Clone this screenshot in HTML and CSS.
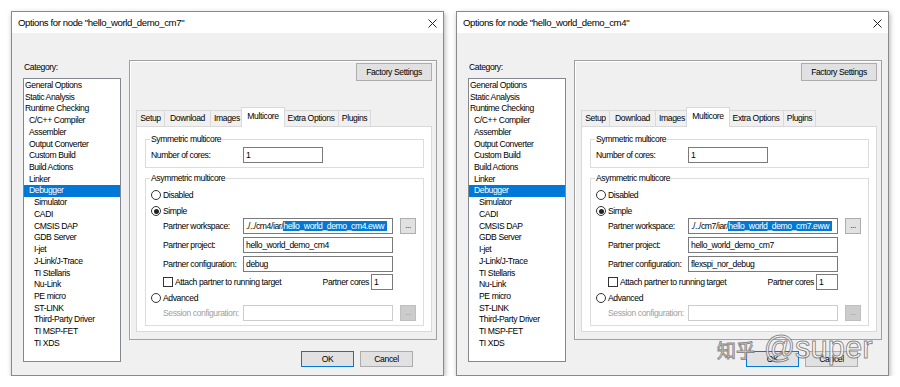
FILE: index.html
```html
<!DOCTYPE html>
<html lang="en">
<head>
    <meta charset="UTF-8">
    <title>Options for node</title>
    <link rel="stylesheet" href="styles.css">
</head>
<body>
<div class="screen">

    <!-- cm7 -->
    <div class="dialog">
        <div class="titlebar">
            <span class="title">Options for node "hello_world_demo_cm7"</span>
            <svg class="close" width="9" height="9" viewBox="0 0 9 9"><path d="M0.5 0.5L8.5 8.5M8.5 0.5L0.5 8.5" stroke="#222" stroke-width="1"/></svg>
        </div>
        <div class="dlg-body">
            <div class="cat-col">
                <div class="cat-label">Category:</div>
                <ul class="cat-list">
                    <li>General Options</li>
                    <li>Static Analysis</li>
                    <li>Runtime Checking</li>
                    <li class="l1">C/C++ Compiler</li>
                    <li class="l1">Assembler</li>
                    <li class="l1">Output Converter</li>
                    <li class="l1">Custom Build</li>
                    <li class="l1">Build Actions</li>
                    <li class="l1">Linker</li>
                    <li class="l1 sel">Debugger</li>
                    <li class="l2">Simulator</li>
                    <li class="l2">CADI</li>
                    <li class="l2">CMSIS DAP</li>
                    <li class="l2">GDB Server</li>
                    <li class="l2">I-jet</li>
                    <li class="l2">J-Link/J-Trace</li>
                    <li class="l2">TI Stellaris</li>
                    <li class="l2">Nu-Link</li>
                    <li class="l2">PE micro</li>
                    <li class="l2">ST-LINK</li>
                    <li class="l2">Third-Party Driver</li>
                    <li class="l2">TI MSP-FET</li>
                    <li class="l2">TI XDS</li>
                </ul>
            </div>
            <div class="main-col">
                <div class="panel">
                    <div class="panel-top"><span class="btn factory">Factory Settings</span></div>
                    <div class="tabs">
                        <span class="tab t-setup">Setup</span>
                        <span class="tab t-download">Download</span>
                        <span class="tab t-images">Images</span>
                        <span class="tab t-multi active">Multicore</span>
                        <span class="tab t-extra">Extra Options</span>
                        <span class="tab t-plugins">Plugins</span>
                    </div>
                    <div class="page">
                        <fieldset class="group sym">
                            <legend>Symmetric multicore</legend>
                            <div class="row">
                                <span class="lbl lbl-wide">Number of cores:</span>
                                <span class="field f-cores">1</span>
                            </div>
                        </fieldset>
                        <fieldset class="group asym">
                            <legend>Asymmetric multicore</legend>
                            <div class="opt"><span class="radio"></span>Disabled</div>
                            <div class="opt"><span class="radio on"></span>Simple</div>
                            <div class="sub">
                                <div class="row">
                                    <span class="lbl">Partner workspace:</span>
                                    <span class="field f-long">./../cm4/iar/<span class="hl">hello_world_demo_cm4.eww</span></span>
                                    <span class="btn browse">...</span>
                                </div>
                                <div class="row">
                                    <span class="lbl">Partner project:</span>
                                    <span class="field f-long">hello_world_demo_cm4</span>
                                </div>
                                <div class="row">
                                    <span class="lbl">Partner configuration:</span>
                                    <span class="field f-long">debug</span>
                                </div>
                                <div class="row attach">
                                    <span class="check"></span>
                                    <span>Attach partner to running target</span>
                                    <span class="cores-lbl">Partner cores</span>
                                    <span class="field f-small">1</span>
                                </div>
                            </div>
                            <div class="opt"><span class="radio"></span>Advanced</div>
                            <div class="sub">
                                <div class="row off">
                                    <span class="lbl">Session configuration:</span>
                                    <span class="field f-long"></span>
                                    <span class="btn browse">...</span>
                                </div>
                            </div>
                        </fieldset>
                    </div>
                </div>
                <div class="actions">
                    <span class="btn ok">OK</span>
                    <span class="btn cancel">Cancel</span>
                </div>
            </div>
        </div>
    </div>

    <!-- cm4 -->
    <div class="dialog">
        <div class="titlebar">
            <span class="title">Options for node "hello_world_demo_cm4"</span>
            <svg class="close" width="9" height="9" viewBox="0 0 9 9"><path d="M0.5 0.5L8.5 8.5M8.5 0.5L0.5 8.5" stroke="#222" stroke-width="1"/></svg>
        </div>
        <div class="dlg-body">
            <div class="cat-col">
                <div class="cat-label">Category:</div>
                <ul class="cat-list">
                    <li>General Options</li>
                    <li>Static Analysis</li>
                    <li>Runtime Checking</li>
                    <li class="l1">C/C++ Compiler</li>
                    <li class="l1">Assembler</li>
                    <li class="l1">Output Converter</li>
                    <li class="l1">Custom Build</li>
                    <li class="l1">Build Actions</li>
                    <li class="l1">Linker</li>
                    <li class="l1 sel">Debugger</li>
                    <li class="l2">Simulator</li>
                    <li class="l2">CADI</li>
                    <li class="l2">CMSIS DAP</li>
                    <li class="l2">GDB Server</li>
                    <li class="l2">I-jet</li>
                    <li class="l2">J-Link/J-Trace</li>
                    <li class="l2">TI Stellaris</li>
                    <li class="l2">Nu-Link</li>
                    <li class="l2">PE micro</li>
                    <li class="l2">ST-LINK</li>
                    <li class="l2">Third-Party Driver</li>
                    <li class="l2">TI MSP-FET</li>
                    <li class="l2">TI XDS</li>
                </ul>
            </div>
            <div class="main-col">
                <div class="panel">
                    <div class="panel-top"><span class="btn factory">Factory Settings</span></div>
                    <div class="tabs">
                        <span class="tab t-setup">Setup</span>
                        <span class="tab t-download">Download</span>
                        <span class="tab t-images">Images</span>
                        <span class="tab t-multi active">Multicore</span>
                        <span class="tab t-extra">Extra Options</span>
                        <span class="tab t-plugins">Plugins</span>
                    </div>
                    <div class="page">
                        <fieldset class="group sym">
                            <legend>Symmetric multicore</legend>
                            <div class="row">
                                <span class="lbl lbl-wide">Number of cores:</span>
                                <span class="field f-cores">1</span>
                            </div>
                        </fieldset>
                        <fieldset class="group asym">
                            <legend>Asymmetric multicore</legend>
                            <div class="opt"><span class="radio"></span>Disabled</div>
                            <div class="opt"><span class="radio on"></span>Simple</div>
                            <div class="sub">
                                <div class="row">
                                    <span class="lbl">Partner workspace:</span>
                                    <span class="field f-long">./../cm7/iar/<span class="hl">hello_world_demo_cm7.eww</span></span>
                                    <span class="btn browse">...</span>
                                </div>
                                <div class="row">
                                    <span class="lbl">Partner project:</span>
                                    <span class="field f-long">hello_world_demo_cm7</span>
                                </div>
                                <div class="row">
                                    <span class="lbl">Partner configuration:</span>
                                    <span class="field f-long">flexspi_nor_debug</span>
                                </div>
                                <div class="row attach">
                                    <span class="check"></span>
                                    <span>Attach partner to running target</span>
                                    <span class="cores-lbl">Partner cores</span>
                                    <span class="field f-small">1</span>
                                </div>
                            </div>
                            <div class="opt"><span class="radio"></span>Advanced</div>
                            <div class="sub">
                                <div class="row off">
                                    <span class="lbl">Session configuration:</span>
                                    <span class="field f-long"></span>
                                    <span class="btn browse">...</span>
                                </div>
                            </div>
                        </fieldset>
                    </div>
                </div>
                <div class="actions">
                    <span class="btn ok">OK</span>
                    <span class="btn cancel">Cancel</span>
                </div>
            </div>
        </div>
        <div class="watermark"><span class="wm-cn">知乎</span> @super</div>
    </div>

</div>
</body>
</html>
```

FILE: styles.css
```css
* {
    margin: 0;
    padding: 0;
    box-sizing: border-box;
}
body {
    background: #fff;
    font-family: "Liberation Sans", Arial, sans-serif;
    font-size: 8.6px;
    letter-spacing: -0.4px;
    color: #000;
}
.screen {
    display: flex;
    gap: 12px;
    padding: 11px 0 0 11px;
}
/*对话框*/
.dialog {
    position: relative;
    width: 433px;
    height: 365px;
    border: 1px solid #8a8a8a;
    background: #f0f0f0;
    box-shadow: 1px 2px 5px rgba(0, 0, 0, 0.3);
    display: flex;
    flex-direction: column;
}
.titlebar {
    height: 21px;
    background: #fff;
    display: flex;
    align-items: center;
    justify-content: space-between;
    padding: 0 6px 0 6px;
}
.title {
    font-size: 9.6px;
}
.close {
    margin-top: 1px;
}
.dlg-body {
    flex: 1;
    display: flex;
    gap: 8px;
    padding: 27px 6px 0 11px;
}
/*左侧列表*/
.cat-col {
    width: 98px;
}
.cat-label {
    line-height: 12px;
    margin-top: 1px;
    padding-left: 1px;
}
.cat-list {
    list-style: none;
    margin-top: 5px;
    height: 284px;
    background: #fff;
    border: 1px solid #828790;
    padding-top: 1px;
}
.cat-list li {
    height: 11.73px;
    line-height: 11.73px;
    padding-left: 1px;
    white-space: nowrap;
}
.cat-list .l1 {
    padding-left: 5px;
}
.cat-list .l2 {
    padding-left: 10px;
}
.cat-list .sel {
    background: #0078d7;
    color: #fff;
}
/*右侧*/
.main-col {
    width: 308px;
}
.panel {
    height: 280px;
    border: 1px solid #a0a0a0;
    box-shadow: inset 1px 1px 0 #fff;
    padding: 2px 4px 0 6px;
}
.panel-top {
    display: flex;
    justify-content: flex-end;
    height: 44px;
}
.btn {
    display: inline-flex;
    align-items: center;
    justify-content: center;
    background: #e1e1e1;
    border: 1px solid #adadad;
    height: 18px;
    white-space: nowrap;
}
.factory {
    width: 76px;
}
/*标签页*/
.tabs {
    display: flex;
    align-items: flex-end;
    height: 19px;
}
.tab {
    height: 16px;
    line-height: 15px;
    text-align: center;
    white-space: nowrap;
    border: 1px solid #d9d9d9;
    border-bottom: none;
    background: #f0f0f0;
    margin-right: -1px;
}
.tab.active {
    position: relative;
    z-index: 1;
    height: 20px;
    line-height: 16px;
    background: #fff;
    margin: 0 -2px -1px -2px;
    padding-bottom: 3px;
}
.t-setup { width: 29px; }
.t-download { width: 47px; }
.t-images { width: 34px; }
.t-multi { width: 44px; }
.t-extra { width: 56px; }
.t-plugins { width: 33px; }
.page {
    height: 206px;
    width: 296px;
    background: #fff;
    border: 1px solid #d9d9d9;
    padding: 6px 7px 0 8px;
}
/*分组*/
.group {
    border: 1px solid #dcdcdc;
    padding: 0 5px 3px 5px;
}
.group legend {
    padding: 0 1px;
    margin-left: -1px;
    line-height: 12px;
}
.sym {
    margin-bottom: 4px;
}
.asym {
    padding-top: 3px;
}
.row {
    display: flex;
    align-items: center;
    height: 19px;
}
.lbl {
    width: 80px;
    white-space: nowrap;
}
.lbl-wide {
    width: 92px;
}
.field {
    height: 16px;
    background: #fff;
    border: 1px solid #7a7a7a;
    padding-left: 2px;
    display: flex;
    align-items: center;
    white-space: nowrap;
    overflow: hidden;
}
.f-cores {
    width: 80px;
}
.f-long {
    width: 150px;
}
.f-small {
    width: 22px;
}
.hl {
    background: #0078d7;
    color: #fff;
    padding-right: 3px;
}
.browse {
    width: 16px;
    height: 16px;
    margin-left: 7px;
    font-size: 8px;
}
.opt {
    display: flex;
    align-items: center;
    height: 16px;
    gap: 2px;
}
.radio {
    width: 10px;
    height: 10px;
    border: 1px solid #333;
    border-radius: 50%;
    background: #fff;
    display: flex;
    align-items: center;
    justify-content: center;
}
.radio.on::after {
    content: "";
    width: 5px;
    height: 5px;
    border-radius: 50%;
    background: #222;
}
.sub {
    padding-left: 12px;
    margin-top: -3px;
}
.attach {
    width: 230px;
    height: 17px;
    gap: 2px;
}
.check {
    width: 10px;
    height: 10px;
    border: 1px solid #333;
    background: #fff;
}
.cores-lbl {
    margin-left: auto;
}
.off {
    color: #a0a0a0;
}
.off .field {
    border-color: #cccccc;
}
.off .browse {
    background: #cccccc;
    border-color: #bfbfbf;
    color: #999;
}
/*底部按钮*/
.actions {
    display: flex;
    justify-content: flex-end;
    gap: 6px;
    margin-top: 11px;
    padding-right: 24px;
}
.ok, .cancel {
    width: 53px;
    height: 16px;
}
.ok {
    border-color: #0078d7;
}
/*水印*/
.watermark {
    position: absolute;
    left: 260px;
    top: 318px;
    font-size: 31px;
    line-height: 36px;
    letter-spacing: 0;
    color: rgba(255, 255, 255, 0.75);
    -webkit-text-stroke: 1px rgba(90, 90, 90, 0.7);
    white-space: nowrap;
}
.wm-cn {
    font-family: "Noto Sans CJK SC", sans-serif;
    font-size: 19px;
}
```
